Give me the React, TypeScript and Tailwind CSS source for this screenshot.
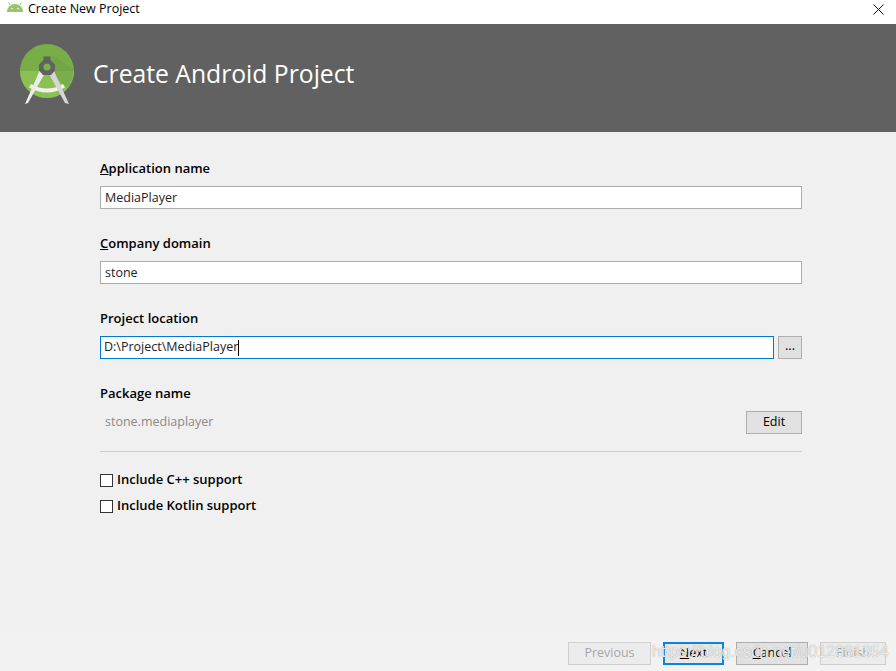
import React from 'react';

const font = { fontFamily: '"Open Sans", "Noto Sans", sans-serif' };

const StudioLogo = () => (
    <svg width="56" height="60" viewBox="0 0 56 60" className="shrink-0">
        <circle cx="28" cy="27" r="27" fill="#78ad47" />
        <path d="M1 27a27 27 0 0 0 54 0z" fill="#8bc152" />
        <path d="M33 11l21 14a27 27 0 0 1-6 19L33 30z" fill="#6e9f43" opacity="0.55" />
        <path d="M12 40q16 9 32 0l2 3.500q-18 10-36 0z" fill="#f1f1f1" />
        <path d="M20.500 27l5 3L9 59l-3 1z" fill="#ececec" />
        <path d="M35 27l-5 3 16 29 4 1z" fill="#d6d6d6" />
        <path d="M24.500 12.500h7V16l4.500 4.500v6L32 31h-8l-4-4.500v-6l4.500-4.500z" fill="#616161" />
        <circle cx="28" cy="23" r="3.500" fill="#7cb24a" />
    </svg>
);

const AndroidIcon = () => (
    <svg width="16" height="10" viewBox="0 0 16 10" className="shrink-0 -mt-1">
        <path d="M0 10a8 8 0 0 1 16 0z" fill="#9ac46a" />
        <path d="M3 3L1.500 0.500M13 3l1.500-2.500" stroke="#9ac46a" strokeWidth="1" />
        <circle cx="5" cy="6.500" r="0.800" fill="#fff" />
        <circle cx="11" cy="6.500" r="0.800" fill="#fff" />
    </svg>
);

const Field = ({ label, u, value }: { label: string; u?: string; value: string }) => (
    <div className="h-[75px]">
        <div className="h-[27px] text-[13px] leading-[18px] font-semibold text-black">
            {u && <span className="underline">{u}</span>}{label}
        </div>
        <div className="h-[23px] border border-[#adadad] bg-white px-1 text-[12.5px] leading-[21px] text-[#222]">
            {value}
        </div>
    </div>
);

const Check = ({ label }: { label: string }) => (
    <div className="flex h-[26px] items-center gap-1">
        <div className="h-[13px] w-[13px] border border-[#333] bg-white" />
        <span className="text-[13px] font-semibold text-black">{label}</span>
    </div>
);

const FooterButton = ({ children, className }: { children: React.ReactNode; className: string }) => (
    <div className={`flex h-[23px] items-center justify-center text-[12.5px] ${className}`}>{children}</div>
);

export default function App() {
    return (
        <div className="relative flex h-[671px] w-[896px] flex-col overflow-hidden bg-[#f0f0f0]" style={font}>
            {/* Title bar */}
            <div className="flex h-6 items-center bg-white pb-[6px] pl-[7px] pr-[12px] text-black">
                <AndroidIcon />
                <span className="ml-[5px] text-[12.5px]">Create New Project</span>
                <svg className="ml-auto" width="11" height="11" viewBox="0 0 11 11">
                    <path d="M0.500 0.500l10 10M10.500 0.500l-10 10" stroke="#111" strokeWidth="1" />
                </svg>
            </div>

            {/* Banner */}
            <div className="flex h-[108px] items-start bg-[#616161] pl-[19px] pt-[20px]">
                <StudioLogo />
                <span className="ml-[18px] mt-2 text-[24.7px] leading-[44px] text-white">Create Android Project</span>
            </div>

            {/* Form */}
            <div className="flex-1 pl-[100px] pr-[94px] pt-[27px]">
                <Field u="A" label="pplication name" value="MediaPlayer" />
                <Field u="C" label="ompany domain" value="stone" />

                <div className="h-[75px]">
                    <div className="h-[27px] text-[13px] leading-[18px] font-semibold text-black">Project location</div>
                    <div className="flex gap-[4px]">
                        <div className="flex h-[23px] flex-1 items-center border border-[#0078d7] bg-white px-[3px] text-[12.5px] text-[#222]">
                            D:\Project\MediaPlayer
                            <span className="h-[16px] w-px bg-black" />
                        </div>
                        <div className="flex h-[23px] w-6 items-center justify-center border border-[#adadad] bg-[#e1e1e1] pb-[3px] text-[13px] text-black">...</div>
                    </div>
                </div>

                <div className="h-[27px] text-[13px] leading-[18px] font-semibold text-black">Package name</div>
                <div className="flex h-[23px] items-center justify-between">
                    <span className="pl-[5px] text-[12.5px] text-[#8a8a8a]">stone.mediaplayer</span>
                    <div className="flex h-[23px] w-14 items-center justify-center border border-[#adadad] bg-[#e1e1e1] pb-px text-[12.5px] text-black">Edit</div>
                </div>

                <div className="mb-[15px] mt-[17px] h-px bg-[#cdcdcd]" />
                <Check label="Include C++ support" />
                <Check label="Include Kotlin support" />
            </div>

            {/* Footer */}
            <div className="flex h-[39px] items-start gap-[12px] bg-[#f2f2f2] pl-[568px] pt-[10px]">
                <FooterButton className="w-[83px] border border-[#cfcfcf] bg-[#ececec] text-[#a6a6a6]">Previous</FooterButton>
                <FooterButton className="w-[61px] border-2 border-[#0a84e0] bg-[#e8e8e8] text-black"><span><span className="underline">N</span>ext</span></FooterButton>
                <FooterButton className="w-[72px] border border-[#adadad] bg-[#e1e1e1] text-black"><span><span className="underline">C</span>ancel</span></FooterButton>
                <FooterButton className="w-[66px] border border-[#cfcfcf] bg-[#ececec] text-[#a6a6a6]">Finish</FooterButton>
            </div>

            {/* Watermark */}
            <div className="absolute left-[652px] top-[640px] text-[16px] leading-6 text-white/80 [text-shadow:0_0_1px_#8a8a8a]" style={{ fontFamily: '"Liberation Sans", sans-serif' }}>
                https://blog.csdn.net/u012881354
            </div>
        </div>
    );
}
